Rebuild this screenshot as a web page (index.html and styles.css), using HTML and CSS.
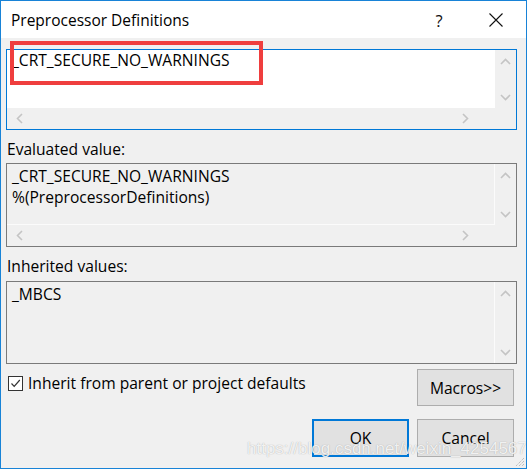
FILE: index.html
```html
<!DOCTYPE html>
<html>
<head>
<meta charset="utf-8">
<link rel="stylesheet" href="styles.css">
</head>
<body>
<div class="window">
  <div class="titlebar">
    <span class="title">Preprocessor Definitions</span>
    <span class="help">?</span>
    <span class="close">
      <svg width="14" height="14" viewBox="0 0 14 14"><path d="M0.5 0.5 L13.5 13.5 M13.5 0.5 L0.5 13.5" stroke="#111" stroke-width="1.1" fill="none"/></svg>
    </span>
  </div>
  <div class="content">
    <div class="editbox focused with-h">
      <div class="text t1">_CRT_SECURE_NO_WARNINGS</div>
      <div class="vscroll">
        <svg class="arrow" width="11" height="7" viewBox="0 0 11 7"><path d="M1 6 L5.5 1.5 L10 6" stroke="#c4c4c4" stroke-width="1.6" fill="none"/></svg>
        <svg class="arrow" width="11" height="7" viewBox="0 0 11 7"><path d="M1 1 L5.5 5.5 L10 1" stroke="#c4c4c4" stroke-width="1.6" fill="none"/></svg>
      </div>
      <div class="hscroll">
        <svg class="arrow" width="7" height="11" viewBox="0 0 7 11"><path d="M6 1 L1.5 5.5 L6 10" stroke="#c4c4c4" stroke-width="1.6" fill="none"/></svg>
        <svg class="arrow" width="7" height="11" viewBox="0 0 7 11"><path d="M1 1 L5.5 5.5 L1 10" stroke="#c4c4c4" stroke-width="1.6" fill="none"/></svg>
      </div>
      <div class="corner"></div>
    </div>

    <div class="label l1">Evaluated value:</div>
    <div class="editbox readonly with-h b2">
      <div class="text">_CRT_SECURE_NO_WARNINGS<br>%(PreprocessorDefinitions)</div>
      <div class="vscroll">
        <svg class="arrow" width="11" height="7" viewBox="0 0 11 7"><path d="M1 6 L5.5 1.5 L10 6" stroke="#c4c4c4" stroke-width="1.6" fill="none"/></svg>
        <svg class="arrow" width="11" height="7" viewBox="0 0 11 7"><path d="M1 1 L5.5 5.5 L10 1" stroke="#c4c4c4" stroke-width="1.6" fill="none"/></svg>
      </div>
      <div class="hscroll">
        <svg class="arrow" width="7" height="11" viewBox="0 0 7 11"><path d="M6 1 L1.5 5.5 L6 10" stroke="#c4c4c4" stroke-width="1.6" fill="none"/></svg>
        <svg class="arrow" width="7" height="11" viewBox="0 0 7 11"><path d="M1 1 L5.5 5.5 L1 10" stroke="#c4c4c4" stroke-width="1.6" fill="none"/></svg>
      </div>
      <div class="corner"></div>
    </div>

    <div class="label l2">Inherited values:</div>
    <div class="editbox readonly b3">
      <div class="text">_MBCS</div>
      <div class="vscroll">
        <svg class="arrow" width="11" height="7" viewBox="0 0 11 7"><path d="M1 6 L5.5 1.5 L10 6" stroke="#c4c4c4" stroke-width="1.6" fill="none"/></svg>
        <svg class="arrow" width="11" height="7" viewBox="0 0 11 7"><path d="M1 1 L5.5 5.5 L10 1" stroke="#c4c4c4" stroke-width="1.6" fill="none"/></svg>
      </div>
    </div>

    <div class="optrow">
      <label class="check">
        <span class="box"><svg width="11" height="11" viewBox="0 0 11 11"><path d="M1.5 5.5 L4.2 8.3 L9.8 2" stroke="#333" stroke-width="1.2" fill="none"/></svg></span>
        <span>Inherit from parent or project defaults</span>
      </label>
      <button class="btn">Macros&gt;&gt;</button>
    </div>

    <div class="btnrow">
      <button class="btn default">OK</button>
      <button class="btn">Cancel</button>
    </div>
  </div>

  <div class="highlight"></div>
  <div class="watermark">https://blog.csdn.net/weixin_42545675</div>
  <svg class="grip" width="10" height="10" viewBox="0 0 10 10">
    <path d="M9 1 L1 9 M9 4 L4 9 M9 7 L7 9" stroke="#a8a8a8" stroke-width="1" stroke-dasharray="1 1" fill="none"/>
  </svg>
</div>
</body>
</html>
```

FILE: styles.css
```css
* { box-sizing: border-box; }
html, body { margin: 0; padding: 0; }
body {
  font-family: "Open Sans", "Noto Sans", sans-serif;
  font-size: 15.6px;
  color: #000;
  background: #f0f0f0;
}
.window {
  position: relative;
  width: 527px;
  height: 469px;
  border: 1px solid #1883d7;
  background: #f0f0f0;
  overflow: hidden;
}
.titlebar {
  height: 37px;
  background: #fff;
  display: flex;
  align-items: center;
  padding-left: 10px;
}
.title { flex: 1; font-size: 15.5px; padding-top: 1px; }
.help { width: 16px; margin-right: 42px; text-align: center; font-size: 16.5px; padding-top: 1px; color: #111; }
.close { width: 14px; height: 14px; margin-right: 23px; display: flex; }
.content {
  padding: 11px 9px 0 5px;
  display: flex;
  flex-direction: column;
}
.editbox {
  display: grid;
  grid-template-columns: 1fr 21px;
  grid-template-rows: 1fr;
  border: 1px solid #7a7a7a;
  height: 83px;
}
.editbox.with-h { grid-template-rows: 1fr 21px; }
.editbox.focused {
  border-color: #0078d7;
  height: 81px;
}
.editbox .text {
  padding: 2px 5px 0 5px;
  line-height: 21px;
  white-space: nowrap;
  overflow: hidden;
}
.editbox .text.t1 { padding-top: 0; }
.focused .text { background: #fff; }
.readonly .text {
  border-right: 1px solid #fbfbfb;
}
.readonly.with-h .text { border-bottom: 1px solid #fbfbfb; }
.b2 { height: 84px; }
.vscroll {
  display: flex;
  flex-direction: column;
  justify-content: space-between;
  align-items: center;
  padding: 8px 0 7px;
}
.hscroll {
  display: flex;
  justify-content: space-between;
  align-items: center;
  padding: 0 26px 0 9px;
  grid-column: 1 / 2;
}
.corner { background: #f0f0f0; }
.arrow { display: block; }
.label {
  line-height: 20px;
  height: 20px;
  padding-left: 1px;
}
.l1 { margin: 9px 0 4px; }
.l2 { margin: 9px 0 5px; }
.optrow {
  display: flex;
  justify-content: space-between;
  align-items: flex-start;
  margin-top: 5px;
  padding-right: 3px;
}
.check {
  display: flex;
  align-items: center;
  gap: 5px;
  margin-top: 4px;
  margin-left: 2px;
  line-height: 20px;
}
.check .box {
  width: 15px;
  height: 15px;
  border: 1px solid #333;
  background: #fff;
  display: flex;
  align-items: center;
  justify-content: center;
}
.btn {
  width: 97px;
  height: 37px;
  background: #e1e1e1;
  border: 1px solid #adadad;
  font-family: "Open Sans", "Noto Sans", sans-serif;
  font-size: 15.6px;
  color: #000;
  padding: 0;
  margin: 0;
}
.btnrow {
  display: flex;
  justify-content: flex-end;
  gap: 8px;
  margin-top: 13px;
  padding-right: 3px;
}
.btnrow .btn { height: 38px; }
.btn.default { border: 2px solid #0078d7; }
.highlight {
  position: absolute;
  left: 9px;
  top: 40px;
  width: 253px;
  height: 44px;
  border: 4px solid #ef3e3e;
  pointer-events: none;
}
.watermark {
  position: absolute;
  left: 246px;
  top: 438px;
  font-family: "Liberation Sans", Arial, sans-serif;
  font-size: 17px;
  color: rgba(255, 255, 255, 0.85);
  text-shadow: 0 0 1px rgba(110, 110, 110, 0.6);
  white-space: nowrap;
  pointer-events: none;
}
.grip {
  position: absolute;
  right: 1px;
  bottom: 1px;
}
```
